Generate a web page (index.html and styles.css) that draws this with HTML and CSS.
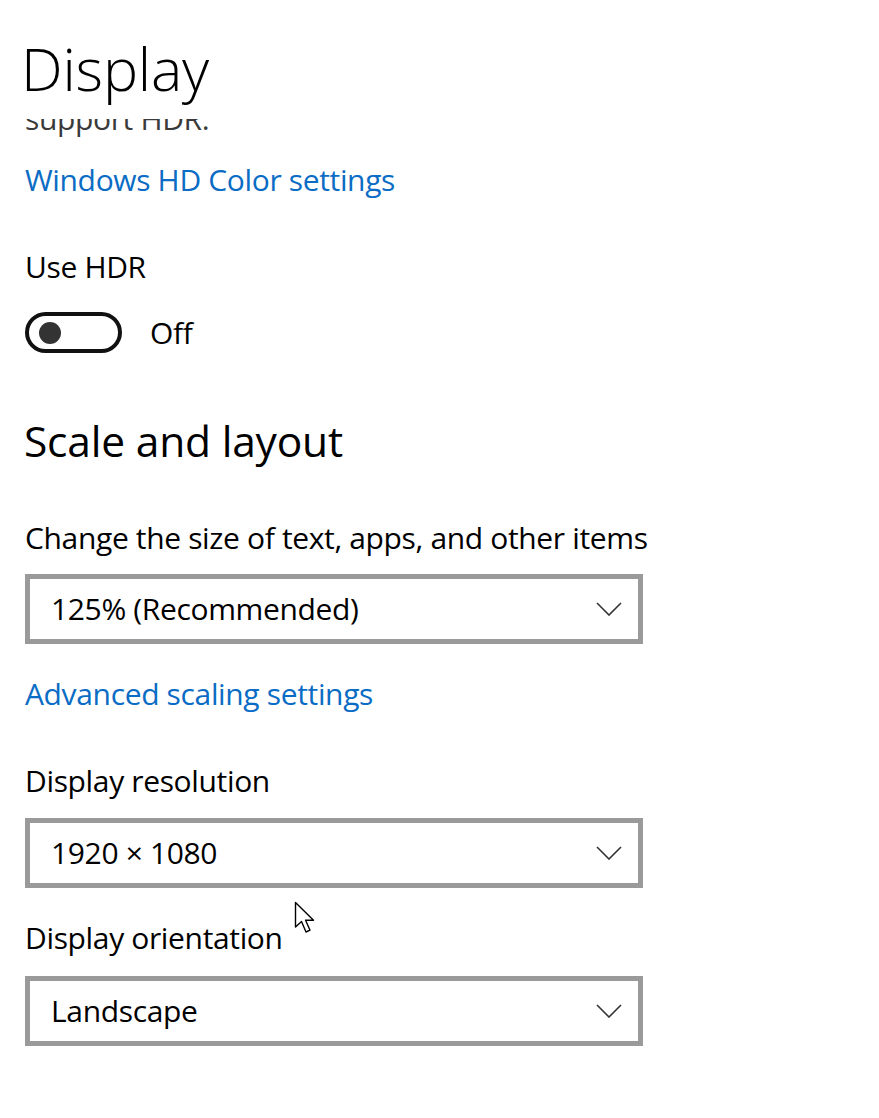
FILE: index.html
```html
<!DOCTYPE html>
<html lang="en">
<head>
<meta charset="utf-8">
<title>Display</title>
<link rel="stylesheet" href="styles.css">
</head>
<body>
<div class="page">
  <header class="header">
    <h1 class="title">Display</h1>
  </header>
  <main class="content">
    <div class="clip">
      <p class="cut">support HDR.</p>
    </div>
    <a class="link link-hd" href="#">Windows HD Color settings</a>
    <div class="label label-hdr">Use HDR</div>
    <div class="toggle-row">
      <span class="toggle"><span class="knob"></span></span>
      <span class="toggle-text">Off</span>
    </div>
    <h2 class="section">Scale and layout</h2>
    <div class="label label-size">Change the size of text, apps, and other items</div>
    <div class="select select-1">
      <span class="select-value">125% (Recommended)</span>
      <svg class="chev" width="26" height="14" viewBox="0 0 26 14"><path d="M1 1 L13 13 L25 1" fill="none" stroke="#333" stroke-width="1.6"/></svg>
    </div>
    <a class="link link-adv" href="#">Advanced scaling settings</a>
    <div class="label label-res">Display resolution</div>
    <div class="select select-2">
      <span class="select-value">1920 × 1080</span>
      <svg class="chev" width="26" height="14" viewBox="0 0 26 14"><path d="M1 1 L13 13 L25 1" fill="none" stroke="#333" stroke-width="1.6"/></svg>
    </div>
    <div class="label label-ori">Display orientation</div>
    <div class="select select-3">
      <span class="select-value">Landscape</span>
      <svg class="chev" width="26" height="14" viewBox="0 0 26 14"><path d="M1 1 L13 13 L25 1" fill="none" stroke="#333" stroke-width="1.6"/></svg>
    </div>
  </main>
  <svg class="cursor" width="24" height="36" viewBox="0 0 24 36"><path d="M1.5 1.5 L1.5 26 L7.5 20.5 L12 31 L16 29.2 L11.6 19.2 L19.5 19.2 Z" fill="#fff" stroke="#000" stroke-width="1.4" stroke-linejoin="round"/></svg>
</div>
</body>
</html>
```

FILE: styles.css
```css
html, body {
  margin: 0;
  padding: 0;
  background: #fff;
}

body {
  font-family: "Open Sans", "Noto Sans", "Liberation Sans", sans-serif;
  color: #000;
  font-size: 30px;
  line-height: 40px;
  letter-spacing: -0.35px;
}

.page {
  position: relative;
  width: 879px;
  height: 1118px;
  overflow: hidden;
}

.header {
  height: 119px;
  box-sizing: border-box;
  padding: 29px 0 0 21px;
  background: #fff;
}

.title {
  margin: 0;
  font-size: 59px;
  line-height: 78px;
  font-weight: 300;
  letter-spacing: -0.2px;
}

.content {
  padding-left: 25px;
  display: flex;
  flex-direction: column;
  align-items: flex-start;
}

.clip {
  overflow: hidden;
  height: 19px;
}

.cut {
  margin: -20px 0 0 0;
  color: #3a3a3a;
}

.link {
  color: #0a6cc4;
  text-decoration: none;
}

.link-hd { margin-top: 22px; }

.label-hdr { margin-top: 47px; }

.toggle-row {
  margin-top: 25px;
  display: flex;
  align-items: center;
  gap: 28px;
}

.toggle {
  width: 97px;
  height: 41px;
  box-sizing: border-box;
  border: 4px solid #111;
  border-radius: 21px;
  display: flex;
  align-items: center;
  padding-left: 10px;
}

.knob {
  width: 22px;
  height: 22px;
  border-radius: 50%;
  background: #333;
}

.section {
  margin: 60px 0 0 -1px;
  font-size: 42.5px;
  line-height: 56px;
  font-weight: 400;
  letter-spacing: -0.2px;
}

.label-size { margin-top: 49px; }

.select {
  width: 618px;
  height: 70px;
  box-sizing: border-box;
  border: 5px solid #9a9a9a;
  display: flex;
  align-items: center;
  justify-content: space-between;
  padding: 0 16px 0 21px;
  line-height: 60px;
}

.select-1 { margin-top: 16px; }
.link-adv { margin-top: 30px; }
.label-res { margin-top: 47px; }
.select-2 { margin-top: 17px; }
.label-ori { margin-top: 30px; }
.select-3 { margin-top: 18px; }

.chev {
  display: block;
}

.cursor {
  position: absolute;
  left: 294px;
  top: 901px;
}
```
